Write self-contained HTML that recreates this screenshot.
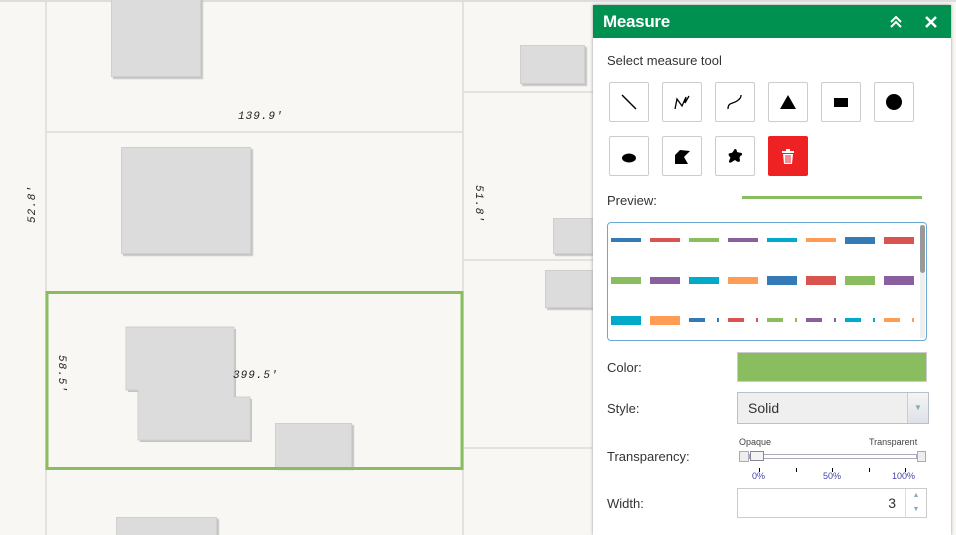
<!DOCTYPE html>
<html style="overflow:hidden"><head><style>
html,body{margin:0;width:956px;height:535px;overflow:hidden}
body{background:#f8f7f3;font-family:"Liberation Sans",sans-serif;position:relative}
.b{position:absolute;background:#dcdcdc;border:1px solid #cfcfcf;box-shadow:2px 2px 1px #c4c4c4}
.l{position:absolute;background:#e4e2de}
.t{position:absolute;font:italic 11px "Liberation Mono",monospace;color:#222;letter-spacing:1px}
#p{position:absolute;left:593px;top:5px;width:358px;height:530px;background:#fff;box-shadow:0 0 3px #999}
#h{height:33px;background:#009050;color:#fff;font-weight:bold;font-size:17px;line-height:33px;padding-left:10px;position:relative;letter-spacing:-0.3px}
.tb{position:absolute;width:38px;height:38px;border:1px solid #ccc;border-radius:2px;background:#fff}
.tb svg{position:absolute;left:9px;top:9px}
.lab{position:absolute;font-size:13px;color:#333;left:14px}
.sw{position:absolute;height:5px}
</style></head><body>
<div class="l" style="left:45px;top:0;width:2px;height:535px"></div>
<div class="l" style="left:462px;top:0;width:2px;height:535px"></div>
<div class="l" style="left:47px;top:131px;width:415px;height:2px"></div>
<div class="l" style="left:464px;top:91px;width:130px;height:2px"></div>
<div class="l" style="left:464px;top:259px;width:130px;height:2px"></div>
<div class="l" style="left:464px;top:447px;width:130px;height:2px"></div>
<div class="l" style="left:0;top:0;width:956px;height:2px;background:#ddd"></div>
<div class="b" style="left:111px;top:-2px;width:88px;height:77px"></div>
<div class="b" style="left:121px;top:147px;width:128px;height:105px"></div>
<div class="b" style="left:520px;top:45px;width:63px;height:37px"></div>
<div class="b" style="left:553px;top:218px;width:40px;height:34px"></div>
<div class="b" style="left:545px;top:270px;width:48px;height:36px"></div>
<div class="b" style="left:275px;top:423px;width:75px;height:43px"></div>
<div class="b" style="left:116px;top:517px;width:99px;height:30px"></div>
<svg style="position:absolute;left:0;top:0" width="600" height="535">
<polygon points="128,329 236,329 236,399 252,399 252,442 140,442 140,392 128,392" fill="#c4c4c4"/>
<polygon points="126,327 234,327 234,397 250,397 250,440 138,440 138,390 126,390" fill="#dcdcdc" stroke="#cfcfcf"/>
<rect x="47" y="292.5" width="415" height="176" fill="none" stroke="#8abd5f" stroke-width="3"/>
</svg>
<div class="t" style="left:238px;top:111px">139.9'</div>
<div class="t" style="left:233px;top:370px">399.5'</div>
<div class="t" style="left:14px;top:198px;transform:rotate(-90deg)">52.8'</div>
<div class="t" style="left:459px;top:198px;transform:rotate(90deg)">51.8'</div>
<div class="t" style="left:42px;top:368px;transform:rotate(90deg)">58.5'</div>
<div id="p">
<div id="h">Measure<svg style="position:absolute;left:296px;top:10px" width="14" height="14"><path d="M2,7 L7,2 L12,7 M2,12 L7,7 L12,12" fill="none" stroke="#fff" stroke-width="2"/></svg><svg style="position:absolute;left:332px;top:11px" width="12" height="12"><path d="M1,1 L11,11 M11,1 L1,11" stroke="#fff" stroke-width="2.5"/></svg></div>
<div class="lab" style="top:48px">Select measure tool</div>
<div class="tb" style="left:16px;top:77px"><svg width="20" height="20"><line x1="3" y1="3" x2="17" y2="17" stroke="#000" stroke-width="1.5"/></svg></div>
<div class="tb" style="left:69px;top:77px"><svg width="20" height="20"><polyline points="3,17 5,7 10,14 14,5 13,11 17,4" fill="none" stroke="#000" stroke-width="1.3"/></svg></div>
<div class="tb" style="left:122px;top:77px"><svg width="20" height="20"><path d="M3,17 C3,10 8,12 12,9 S16,5 16,3" fill="none" stroke="#000" stroke-width="1.3"/></svg></div>
<div class="tb" style="left:175px;top:77px"><svg width="20" height="20"><polygon points="10,3 18,17 2,17"/></svg></div>
<div class="tb" style="left:228px;top:77px"><svg width="20" height="20"><rect x="3" y="6" width="14" height="9"/></svg></div>
<div class="tb" style="left:281px;top:77px"><svg width="20" height="20"><circle cx="10" cy="10" r="8"/></svg></div>
<div class="tb" style="left:16px;top:131px"><svg width="20" height="20"><ellipse cx="10" cy="12" rx="7" ry="4.5"/></svg></div>
<div class="tb" style="left:69px;top:131px"><svg width="20" height="20"><polygon points="3,18 3,9 8,4 18,5 12,11 16,18"/></svg></div>
<div class="tb" style="left:122px;top:131px"><svg width="20" height="20"><path d="M9,4 C10,2 12,3 12,6 C14,7 18,6 17,9 C15,10 14,11 15,14 C15,17 12,16 10,14 C8,15 5,18 4,16 C4,14 6,12 5,11 C3,9 3,7 6,7 C7,7 8,6 9,4Z"/></svg></div>
<div class="tb" style="left:175px;top:131px;background:#ee2222;border-color:#ee2222"><svg width="20" height="20"><rect x="4" y="5" width="12" height="2" fill="#fff"/><rect x="8" y="3" width="4" height="2" fill="#fff"/><path d="M5,8 H15 L14,18 H6Z" fill="#fff"/><path d="M8,9V17M10,9V17M12,9V17" stroke="#ee2222"/></svg></div>
<div class="lab" style="top:188px">Preview:</div>
<div style="position:absolute;left:149px;top:191px;width:180px;height:3px;background:#8abd5f"></div>
<div style="position:absolute;left:14px;top:217px;width:318px;height:117px;border:1px solid #6aa8cf;border-radius:4px">
<div style="position:absolute;right:1px;top:2px;width:5px;height:113px;background:#eee"></div>
<div style="position:absolute;right:1px;top:2px;width:5px;height:48px;background:#999;border-radius:3px"></div>
<div class="sw" style="left:3px;top:15px;width:30px;height:4px;background:#337ab7"></div>
<div class="sw" style="left:42px;top:15px;width:30px;height:4px;background:#d9534f"></div>
<div class="sw" style="left:81px;top:15px;width:30px;height:4px;background:#8abd5f"></div>
<div class="sw" style="left:120px;top:15px;width:30px;height:4px;background:#8a5fa0"></div>
<div class="sw" style="left:159px;top:15px;width:30px;height:4px;background:#00aac8"></div>
<div class="sw" style="left:198px;top:15px;width:30px;height:4px;background:#ff9c55"></div>
<div class="sw" style="left:237px;top:14px;width:30px;height:7px;background:#337ab7"></div>
<div class="sw" style="left:276px;top:14px;width:30px;height:7px;background:#d9534f"></div>
<div class="sw" style="left:3px;top:54px;width:30px;height:7px;background:#8abd5f"></div>
<div class="sw" style="left:42px;top:54px;width:30px;height:7px;background:#8a5fa0"></div>
<div class="sw" style="left:81px;top:54px;width:30px;height:7px;background:#00aac8"></div>
<div class="sw" style="left:120px;top:54px;width:30px;height:7px;background:#ff9c55"></div>
<div class="sw" style="left:159px;top:53px;width:30px;height:9px;background:#337ab7"></div>
<div class="sw" style="left:198px;top:53px;width:30px;height:9px;background:#d9534f"></div>
<div class="sw" style="left:237px;top:53px;width:30px;height:9px;background:#8abd5f"></div>
<div class="sw" style="left:276px;top:53px;width:30px;height:9px;background:#8a5fa0"></div>
<div class="sw" style="left:3px;top:93px;width:30px;height:9px;background:#00aac8"></div>
<div class="sw" style="left:42px;top:93px;width:30px;height:9px;background:#ff9c55"></div>
<div class="sw" style="left:81px;top:95px;width:16px;height:4px;background:#337ab7"></div><div class="sw" style="left:109px;top:95px;width:2px;height:4px;background:#337ab7"></div>
<div class="sw" style="left:120px;top:95px;width:16px;height:4px;background:#d9534f"></div><div class="sw" style="left:148px;top:95px;width:2px;height:4px;background:#d9534f"></div>
<div class="sw" style="left:159px;top:95px;width:16px;height:4px;background:#8abd5f"></div><div class="sw" style="left:187px;top:95px;width:2px;height:4px;background:#8abd5f"></div>
<div class="sw" style="left:198px;top:95px;width:16px;height:4px;background:#8a5fa0"></div><div class="sw" style="left:226px;top:95px;width:2px;height:4px;background:#8a5fa0"></div>
<div class="sw" style="left:237px;top:95px;width:16px;height:4px;background:#00aac8"></div><div class="sw" style="left:265px;top:95px;width:2px;height:4px;background:#00aac8"></div>
<div class="sw" style="left:276px;top:95px;width:16px;height:4px;background:#ff9c55"></div><div class="sw" style="left:304px;top:95px;width:2px;height:4px;background:#ff9c55"></div>
</div>
<div class="lab" style="top:355px">Color:</div>
<div style="position:absolute;left:144px;top:347px;width:188px;height:28px;background:#8abd5f;border:1px solid #ccc"></div>
<div class="lab" style="top:396px">Style:</div>
<div style="position:absolute;left:144px;top:387px;width:190px;height:30px;background:#efefef;border:1px solid #b8c0cc;font-size:14px;line-height:30px;color:#333"><span style="padding-left:10px">Solid</span><div style="position:absolute;right:0;top:0;width:20px;height:30px;border-left:1px solid #ccc;background:linear-gradient(#f4f4f4,#dde2e8);color:#8aa;font-size:8px;text-align:center">▼</div></div>
<div class="lab" style="top:444px">Transparency:</div>
<div style="position:absolute;left:146px;top:432px;font-size:9px;color:#444">Opaque</div>
<div style="position:absolute;left:276px;top:432px;font-size:9px;color:#444">Transparent</div>
<div style="position:absolute;left:146px;top:446px;width:8px;height:9px;border:1px solid #aab;background:#eee"></div>
<div style="position:absolute;left:324px;top:446px;width:7px;height:9px;border:1px solid #aab;background:#eee"></div>
<div style="position:absolute;left:156px;top:449px;width:166px;height:3px;border:1px solid #aab;background:#fff"></div>
<div style="position:absolute;left:157px;top:446px;width:12px;height:8px;border:1px solid #889;background:#f4f4f4"></div>
<div style="position:absolute;left:166px;top:463px;width:1px;height:4px;background:#000;box-shadow:37px 0 #000,73px 0 #000,110px 0 #000,146px 0 #000"></div>
<div style="position:absolute;left:159px;top:466px;font-size:9px;color:#44a">0%</div>
<div style="position:absolute;left:230px;top:466px;font-size:9px;color:#44a">50%</div>
<div style="position:absolute;left:299px;top:466px;font-size:9px;color:#44a">100%</div>
<div class="lab" style="top:491px">Width:</div>
<div style="position:absolute;left:144px;top:483px;width:188px;height:28px;border:1px solid #ccc;background:#fff;font-size:14px;line-height:28px;color:#333"><span style="position:absolute;right:30px">3</span><div style="position:absolute;right:0;top:0;width:20px;height:28px;border-left:1px solid #ddd;color:#8ab;font-size:7px;text-align:center;line-height:14px">▲<br>▼</div></div>
</div>
</body></html>
